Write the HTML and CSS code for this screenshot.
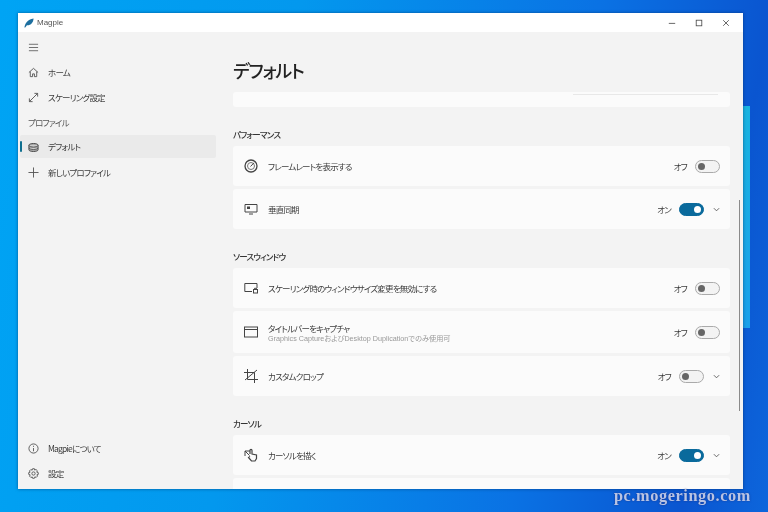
FILE: index.html
```html
<!DOCTYPE html>
<html lang="ja">
<head>
<meta charset="utf-8">
<title>Magpie</title>
<link rel="stylesheet" href="styles.css">
</head>
<body>
<div class="desktop">
  <div class="back-window"></div>
  <div class="window">
    <header class="titlebar">
      <svg class="logo" viewBox="0 0 12 12"><path d="M.5 11.500C1 7 4 1.500 11.500 .5 11.200 5 8.500 9 3.500 8.800L1.500 11.500Z" fill="#1d6f9f"/></svg>
      <span class="app-name">Magpie</span>
      <div class="caption">
        <svg viewBox="0 0 10 10"><path d="M1 5.500H9" stroke="#444" fill="none"/></svg>
        <svg viewBox="0 0 10 10"><rect x="1.500" y="1.500" width="7" height="7" stroke="#444" fill="none"/></svg>
        <svg viewBox="0 0 10 10"><path d="M1.500 1.500L8.500 8.500M8.500 1.500L1.500 8.500" stroke="#444" fill="none"/></svg>
      </div>
    </header>
    <div class="main">
      <nav class="sidebar">
        <svg class="hamburger" viewBox="0 0 12 12"><path d="M1 2.500H11M1 6H11M1 9.500H11" stroke="#666" fill="none"/></svg>
        <a class="nav-item">
          <svg class="nav-icon" viewBox="0 0 12 12"><path d="M1 6L6 1.500 11 6M2.500 5V10.500H5V7.500H7V10.500H9.500V5" stroke="#555" fill="none"/></svg>
          <span>ホーム</span>
        </a>
        <a class="nav-item">
          <svg class="nav-icon" viewBox="0 0 12 12"><path d="M1.500 10.500L10.500 1.500M7 1.500H10.500V5M1.500 7V10.500H5" stroke="#555" fill="none"/></svg>
          <span>スケーリング設定</span>
        </a>
        <div class="nav-header">プロファイル</div>
        <a class="nav-item selected">
          <i class="indicator"></i>
          <svg class="nav-icon" viewBox="0 0 12 12"><path d="M1 3.500C1 1 11 1 11 3.500V8.500C11 11 1 11 1 8.500ZM1 3.800C2 6 10 6 11 3.800M1 6.500C2 8.500 10 8.500 11 6.500" stroke="#444" fill="#aaa"/></svg>
          <span>デフォルト</span>
        </a>
        <a class="nav-item">
          <svg class="nav-icon" viewBox="0 0 12 12"><path d="M6 .5V11.500M.5 6H11.500" stroke="#555" fill="none"/></svg>
          <span>新しいプロファイル</span>
        </a>
        <div class="spacer"></div>
        <a class="nav-item">
          <svg class="nav-icon" viewBox="0 0 12 12"><circle cx="6" cy="6" r="5" stroke="#555" fill="none"/><path d="M6 5.500V9M6 3V4.200" stroke="#555" fill="none"/></svg>
          <span>Magpieについて</span>
        </a>
        <a class="nav-item">
          <svg class="nav-icon" viewBox="0 0 12 12"><circle cx="6" cy="6" r="1.800" stroke="#555" fill="none"/><path d="M5 .8H7L7.300 2.300 8.700 1.600 10.300 3.100 9.500 4.500 11.200 5V7L9.700 7.400 10.400 8.800 8.900 10.300 7.500 9.600 7 11.200H5L4.600 9.700 3.200 10.400 1.700 8.900 2.400 7.500 .8 7V5L2.300 4.600 1.600 3.200 3.100 1.700 4.500 2.400Z" stroke="#555" fill="none"/></svg>
          <span>設定</span>
        </a>
      </nav>
      <section class="content">
        <h1 class="page-title">デフォルト</h1>
        <div class="scroller">
          <div class="card card-partial"><i class="field-line"></i></div>

          <h2 class="group-title">パフォーマンス</h2>
          <div class="group">
            <div class="card">
              <svg class="card-icon" viewBox="0 0 14 14"><circle cx="7" cy="7" r="6" stroke="#444" stroke-width="1.300" fill="none"/><circle cx="7" cy="7" r="3.500" stroke="#777" fill="none"/><path d="M6.500 7.500L10 3.800" stroke="#444" fill="none"/></svg>
              <div class="card-text">フレームレートを表示する</div>
              <span class="state">オフ</span><i class="toggle"></i>
            </div>
            <div class="card">
              <svg class="card-icon" viewBox="0 0 14 14"><path d="M1 2.500H13V10H1ZM5 12H9" stroke="#444" fill="none"/><rect x="3" y="4.500" width="3" height="2.500" fill="#444"/></svg>
              <div class="card-text">垂直同期</div>
              <span class="state">オン</span><i class="toggle on"></i><svg class="chevron" viewBox="0 0 8 8"><path d="M1 2.500L4 5.500 7 2.500" stroke="#555" fill="none"/></svg>
            </div>
          </div>

          <h2 class="group-title">ソースウィンドウ</h2>
          <div class="group">
            <div class="card">
              <svg class="card-icon" viewBox="0 0 14 14"><path d="M8 10.500H.8V2.500H13V7" stroke="#444" fill="none"/><rect x="9.500" y="8.500" width="4" height="3.500" stroke="#444" fill="none"/><path d="M10.500 8.500V7.300H12.500V8.500" stroke="#444" fill="none"/></svg>
              <div class="card-text">スケーリング時のウィンドウサイズ変更を無効にする</div>
              <span class="state">オフ</span><i class="toggle"></i>
            </div>
            <div class="card card-tall">
              <svg class="card-icon" viewBox="0 0 14 14"><rect x=".5" y="2" width="13" height="10" stroke="#444" fill="none"/><path d="M.5 4.500H13.500" stroke="#444" fill="none"/></svg>
              <div class="card-text">タイトルバーをキャプチャ<small>Graphics CaptureおよびDesktop Duplicationでのみ使用可</small></div>
              <span class="state">オフ</span><i class="toggle"></i>
            </div>
            <div class="card">
              <svg class="card-icon" viewBox="0 0 14 14"><path d="M3.500 0V10.500H14M0 3.500H10.500V14M1 11L13 1" stroke="#444" fill="none"/></svg>
              <div class="card-text">カスタムクロップ</div>
              <span class="state">オフ</span><i class="toggle"></i><svg class="chevron" viewBox="0 0 8 8"><path d="M1 2.500L4 5.500 7 2.500" stroke="#555" fill="none"/></svg>
            </div>
          </div>

          <h2 class="group-title">カーソル</h2>
          <div class="group">
            <div class="card">
              <svg class="card-icon" viewBox="0 0 14 14"><path d="M1 3L5.500 7.500M1 3V8M1 3H6" stroke="#444" fill="none"/><path d="M6 6V2.500C6 1 8 1 8 2.500V6L12.500 7V10.500L11 13H7.500L4.500 9.500 6 8.500" stroke="#444" stroke-width="1.200" fill="none"/></svg>
              <div class="card-text">カーソルを描く</div>
              <span class="state">オン</span><i class="toggle on"></i><svg class="chevron" viewBox="0 0 8 8"><path d="M1 2.500L4 5.500 7 2.500" stroke="#555" fill="none"/></svg>
            </div>
            <div class="card"></div>
          </div>
        </div>
        <div class="scrollbar"></div>
      </section>
    </div>
  </div>
  <div class="watermark">pc.mogeringo.com</div>
</div>
</body>
</html>
```
FILE: styles.css
```css
* { box-sizing: border-box; }
html, body { margin: 0; height: 100%; overflow: hidden; }
body { font-family: "Noto Sans CJK JP", "Noto Sans", sans-serif; color: #333; font-feature-settings: "palt" 1; }
.desktop {
  position: relative; width: 768px; height: 512px; overflow: hidden;
  background: linear-gradient(100deg, #00a4f4 0%, #0398ee 35%, #0a72e4 70%, #0a55d0 90%, #0d66dc 100%);
  filter: blur(.4px);
}
.back-window { position: absolute; left: 740px; top: 106px; width: 10px; height: 222px; background: linear-gradient(#19b3e0, #1aa0ea); }
.window {
  position: absolute; left: 18px; top: 13px; width: 725px; height: 476px;
  background: #f3f3f3; display: flex; flex-direction: column;
  box-shadow: 0 0 3px rgba(0,40,90,.6);
}
.titlebar { height: 19px; background: #fff; display: flex; align-items: center; padding-left: 6px; flex: none; }
.logo { width: 10px; height: 10px; }
.app-name { font: 8px "Liberation Sans", sans-serif; color: #555; margin-left: 3px; }
.caption { margin-left: auto; display: flex; gap: 19px; padding-right: 13px; align-items: center; }
.caption svg { width: 8px; height: 8px; display: block; }
.main { flex: 1; display: flex; min-height: 0; }
.sidebar { width: 215px; display: flex; flex-direction: column; padding: 0 0 3px 0; flex: none; letter-spacing: -.8px; }
.hamburger { width: 11px; height: 11px; margin: 10px 0 7px 10px; flex: none; }
.nav-item { height: 25px; flex: none; display: flex; align-items: center; position: relative; margin: 0 17px 0 2px; padding-left: 8px; font-size: 8.500px; color: #3c3c3c; }
.nav-item span { margin-left: 9px; padding-bottom: 2px; }
.nav-icon { width: 11px; height: 11px; flex: none; }
.nav-header { height: 25px; flex: none; font-size: 8.500px; color: #555; display: flex; align-items: center; padding: 0 0 2px 10px; }
.selected { background: #eaeaea; border-radius: 2px; height: 23px; margin-bottom: 2px; padding-top: 1px; }
.indicator { position: absolute; left: 0; top: 6px; width: 2px; height: 11px; background: #0f6f8f; border-radius: 1px; }
.spacer { flex: 1; }
.content { flex: 1; position: relative; display: flex; flex-direction: column; min-width: 0; }
.page-title { margin: 0; font-size: 18px; font-weight: 500; color: #222; height: 60px; padding-top: 25px; line-height: 26px; flex: none; letter-spacing: -1.200px; }
.scroller { flex: 1; overflow: hidden; width: 497px; letter-spacing: -.8px; }
.card {
  height: 40px; background: #fbfbfb; border-radius: 3px; display: flex; align-items: center;
  padding: 0 10px 0 11px; font-size: 8.500px; color: #3c3c3c; flex: none;
}
.card-partial { height: 15px; position: relative; padding: 0; margin-bottom: 1px; }
.field-line { position: absolute; right: 12px; top: 2px; width: 145px; height: 1px; background: #e8e8e8; }
.card-tall { height: 42px; }
.group { display: flex; flex-direction: column; gap: 3px; }
.group-title { margin: 21px 0 6px; font-size: 8.500px; font-weight: 500; line-height: 12px; color: #333; }
.card-icon { width: 14px; height: 14px; flex: none; }
.card-text { margin-left: 10px; flex: 1; }
.card-text small { display: block; font-size: 7.200px; color: #999; line-height: 9px; letter-spacing: 0; font-family: "Liberation Sans", "Noto Sans CJK JP", sans-serif; }
.state { font-size: 8.500px; margin-right: 8px; }
.toggle { width: 25px; height: 13px; border-radius: 7px; border: 1px solid #aaa; background: #f3f3f3; position: relative; flex: none; }
.toggle::after { content: ""; position: absolute; left: 2px; top: 2px; width: 7px; height: 7px; border-radius: 50%; background: #666; }
.toggle.on { background: #0a6a9c; border-color: #0a6a9c; }
.toggle.on::after { left: auto; right: 2px; background: #fff; }
.chevron { width: 7px; height: 7px; margin: 0 0 0 9px; flex: none; }
.scrollbar { position: absolute; right: 3px; top: 168px; width: 1.500px; height: 211px; background: #8a8a8a; }
.watermark {
  position: absolute; right: 17px; bottom: 6px; font: bold 16.300px "Liberation Serif", serif;
  color: #b8c4e4; letter-spacing: .6px; text-shadow: 0 0 2px rgba(30,40,120,.8);
}
```
